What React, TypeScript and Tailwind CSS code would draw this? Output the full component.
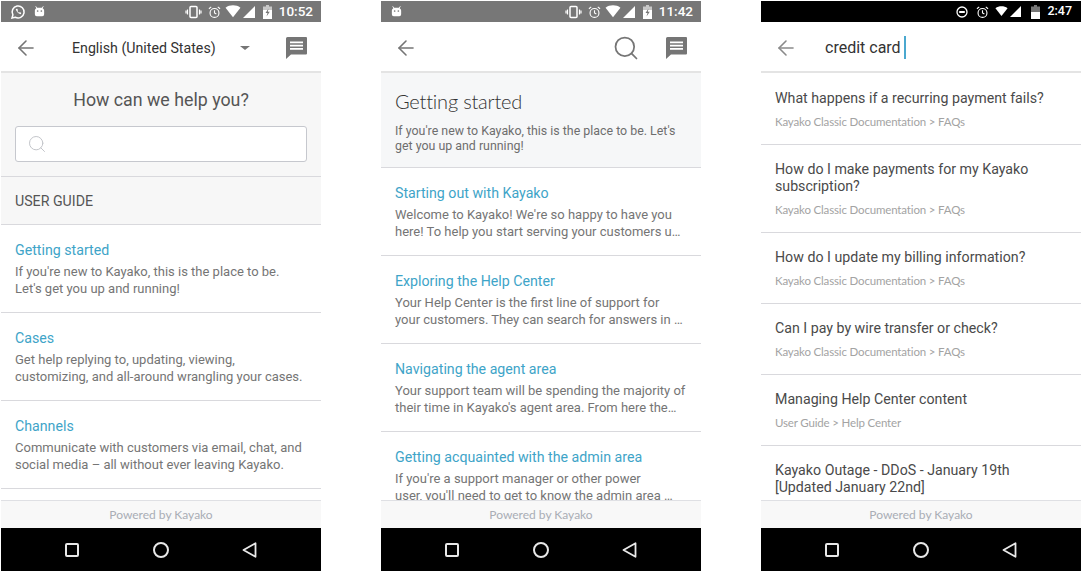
import { ArrowLeft, Search } from "lucide-react";
import type { ReactNode } from "react";

const guide = [
  {
    title: "Getting started",
    lines: ["If you're new to Kayako, this is the place to be.", "Let's get you up and running!"],
  },
  {
    title: "Cases",
    lines: ["Get help replying to, updating, viewing,", "customizing, and all-around wrangling your cases."],
  },
  {
    title: "Channels",
    lines: ["Communicate with customers via email, chat, and", "social media – all without ever leaving Kayako."],
  },
];

const articles = [
  {
    title: "Starting out with Kayako",
    lines: ["Welcome to Kayako! We're so happy to have you", "here! To help you start serving your customers u…"],
  },
  {
    title: "Exploring the Help Center",
    lines: ["Your Help Center is the first line of support for", "your customers. They can search for answers in …"],
  },
  {
    title: "Navigating the agent area",
    lines: ["Your support team will be spending the majority of", "their time in Kayako's agent area. From here the…"],
  },
  {
    title: "Getting acquainted with the admin area",
    lines: ["If you're a support manager or other power", "user, you'll need to get to know the admin area …"],
  },
];

const results = [
  { title: ["What happens if a recurring payment fails?"], crumb: "Kayako Classic Documentation > FAQs" },
  { title: ["How do I make payments for my Kayako", "subscription?"], crumb: "Kayako Classic Documentation > FAQs" },
  { title: ["How do I update my billing information?"], crumb: "Kayako Classic Documentation > FAQs" },
  { title: ["Can I pay by wire transfer or check?"], crumb: "Kayako Classic Documentation > FAQs" },
  { title: ["Managing Help Center content"], crumb: "User Guide > Help Center" },
  { title: ["Kayako Outage - DDoS - January 19th", "[Updated January 22nd]"], crumb: "" },
];

function Android() {
  return (
    <svg width="13" height="13" viewBox="0 0 14 14" fill="#fff">
      <path d="M3 1l1.500 2h5L11 1l.5.4L10.400 3.400c.9.6 1.600 1.600 1.600 2.800V10a2 2 0 0 1-2 2H4a2 2 0 0 1-2-2V6.200c0-1.200.7-2.200 1.600-2.800L2.500 1.400z" />
      <circle cx="5" cy="6.500" r=".9" fill="#777" />
      <circle cx="9" cy="6.500" r=".9" fill="#777" />
    </svg>
  );
}

function WhatsApp() {
  return (
    <svg width="16" height="16" viewBox="0 0 16 16" fill="none" stroke="#fff" strokeWidth="1.500">
      <path d="M2 14l.9-3.100A6 6 0 1 1 5.200 13.200z" />
      <path d="M5.700 5c.6 2.700 2.300 4.500 5 5.200l.6-1.300-1.500-.8-.7.6c-.7-.4-1.300-1-1.700-1.800l.6-.7-.7-1.500z" fill="#fff" stroke="none" />
    </svg>
  );
}

function Vibrate() {
  return (
    <svg width="17" height="14" viewBox="0 0 16 14" fill="none" stroke="#fff">
      <rect x="4.500" y="1.500" width="7" height="11" rx="1" strokeWidth="1.500" />
      <path d="M2 4.500v5M14 4.500v5M.5 5.500v3M15.500 5.500v3" strokeWidth="1.200" />
    </svg>
  );
}

function Alarm() {
  return (
    <svg width="13" height="14" viewBox="0 0 14 14" fill="none" stroke="#fff" strokeWidth="1.200">
      <circle cx="7" cy="8" r="4.800" />
      <path d="M7 5.200V8l2 1.200M1 3.500l2.500-2M13 3.500l-2.500-2" />
    </svg>
  );
}

function Wifi({ width }: { width: number }) {
  return (
    <svg width={width} height={width * 0.8} viewBox="0 0 15 12" fill="#fff">
      <path d="M.5 2.500C4.500-.5 10.500-.5 14.500 2.500L7.500 11.500z" />
    </svg>
  );
}

function Signal({ size }: { size: number }) {
  return (
    <svg width={size} height={size} viewBox="0 0 12 12" fill="#fff">
      <path d="M12 0v12H0z" />
    </svg>
  );
}

function Battery({ bolt }: { bolt: boolean }) {
  return bolt ? (
    <svg width="9" height="14" viewBox="0 0 9 14">
      <path d="M3 0h3v1.500h3V14H0V1.500h3z" fill="#c8c8c8" />
      <path d="M0 5h9v9H0z" fill="#fff" />
      <path d="M5.500 3.500L2.500 8h2l-1 3.500L6.800 6.800h-2z" fill="#777" />
    </svg>
  ) : (
    <svg width="9" height="14" viewBox="0 0 9 14">
      <path d="M3 0h3v1.500h3V14H0V1.500h3z" fill="#777" />
      <path d="M0 7h9v7H0z" fill="#fff" />
    </svg>
  );
}

function GrayStatus({ left, time }: { left: ReactNode; time: string }) {
  return (
    <div className="flex h-[21px] shrink-0 items-center bg-[#777] pl-[9px] pr-[8px] text-white">
      {left}
      <div className="ml-auto flex items-center">
        <Vibrate />
        <div className="ml-[6px] flex"><Alarm /></div>
        <div className="ml-[4px] flex"><Wifi width={16} /></div>
        <div className="ml-[2px] flex"><Signal size={12} /></div>
        <div className="ml-[8px] flex"><Battery bolt /></div>
        <span className="ml-[7px] text-[13.500px] font-medium">{time}</span>
      </div>
    </div>
  );
}

function Nav() {
  return (
    <div className="flex h-[43px] shrink-0 items-center justify-between bg-black pl-[64px] pr-[64px]">
      <div className="h-[14px] w-[14px] rounded-[2px] border-2 border-[#e8e8e8]" />
      <div className="h-[16px] w-[16px] rounded-full border-2 border-[#e8e8e8]" />
      <svg width="15" height="16" viewBox="0 0 15 16" fill="none" stroke="#e8e8e8" strokeWidth="1.800" strokeLinejoin="round">
        <path d="M13.500 1.200v13.600L1.500 8z" />
      </svg>
    </div>
  );
}

function Chat() {
  return (
    <svg width="22" height="22" viewBox="0 0 22 22" fill="#757575">
      <path d="M2.500 0h18.500a1 1 0 0 1 1 1v15.500a1 1 0 0 1-1 1H6L1 22V1.500A1.500 1.500 0 0 1 2.500 0z" />
      <path d="M5 4.500h13v1.700H5zM5 7.800h13v1.700H5zM5 11.100h13v1.700H5z" fill="#fff" />
    </svg>
  );
}

function Phone({ status, children }: { status: ReactNode; children: ReactNode }) {
  return (
    <div className="flex h-[570px] w-[320px] flex-col overflow-hidden bg-white">
      {status}
      {children}
      <div className="flex h-[28px] shrink-0 items-center justify-center border-t border-[#dfe0e4] bg-[#f8f8f8] text-[12px] text-[#a9adb5] font-['Lato',sans-serif]">
        Powered by Kayako
      </div>
      <Nav />
    </div>
  );
}

function Row({ title, lines }: { title: string; lines: string[] }) {
  return (
    <div className="h-[88px] border-b border-[#d9d9dd] pl-[14px] pt-[16px] whitespace-nowrap">
      <div className="text-[14.200px] leading-[18px] text-[#3ea4c8]">{title}</div>
      <div className="mt-[4px] text-[13px] leading-[17px] text-[#757575]">
        {lines.map((l) => (
          <div key={l}>{l}</div>
        ))}
      </div>
    </div>
  );
}

export default function App() {
  return (
    <div className="flex h-[571px] w-[1081px] gap-[60px] overflow-hidden bg-white pt-px pl-px font-['Roboto',sans-serif]">
      {/* Home */}
      <Phone
        status={
          <GrayStatus
            time="10:52"
            left={
              <>
                <WhatsApp />
                <div className="ml-[7px] flex"><Android /></div>
              </>
            }
          />
        }
      >
        <div className="flex h-[51px] shrink-0 items-center border-b-2 border-[#e4e4e4] pl-[13px] pr-[14px] pt-[2px]">
          <ArrowLeft size={24} strokeWidth={1.600} color="#757575" />
          <span className="ml-[34px] mt-[2px] text-[14.200px] text-[#333]">English (United States)</span>
          <div className="ml-[24px] h-0 w-0 border-x-[5px] border-t-[4px] border-x-transparent border-t-[#757575]" />
          <div className="ml-auto flex"><Chat /></div>
        </div>
        <div className="h-[104px] shrink-0 border-b border-[#d9d9dd] bg-[#f7f7f7] px-[14px] pt-[16px]">
          <div className="text-center text-[17.800px] leading-[22px] text-[#555]">How can we help you?</div>
          <div className="mt-[15px] flex h-[36px] items-center rounded-[3px] border border-[#c6c8ce] bg-white pl-[11px]">
            <Search size={20} strokeWidth={1.200} color="#c3c5ca" />
          </div>
        </div>
        <div className="flex h-[48px] shrink-0 items-center border-b border-[#d9d9dd] bg-[#f7f7f7] px-[14px] pt-[2px] text-[14.200px] text-[#555]">
          USER GUIDE
        </div>
        <div className="min-h-0 flex-1">
          {guide.map((g) => (
            <Row key={g.title} title={g.title} lines={g.lines} />
          ))}
        </div>
      </Phone>

      {/* Category */}
      <Phone status={<GrayStatus time="11:42" left={<Android />} />}>
        <div className="flex h-[51px] shrink-0 items-center border-b-2 border-[#e4e4e4] pl-[13px] pr-[14px] pt-[2px]">
          <ArrowLeft size={24} strokeWidth={1.600} color="#757575" />
          <Search size={28} strokeWidth={1.500} color="#757575" className="ml-auto mr-[25px]" />
          <Chat />
        </div>
        <div className="h-[95px] shrink-0 border-b border-[#d9d9dd] bg-[#f6f7f8] pl-[14px] pt-[16px]">
          <div className="text-[20px] font-light leading-[24px] tracking-[-0.2px] text-[#333] font-['Lato',sans-serif]">Getting started</div>
          <div className="mt-[10px] text-[12.400px] leading-[15px] text-[#6e6e6e]">
            <div>If you're new to Kayako, this is the place to be. Let's</div>
            <div>get you up and running!</div>
          </div>
        </div>
        <div className="min-h-0 flex-1 overflow-hidden">
          {articles.map((a) => (
            <Row key={a.title} title={a.title} lines={a.lines} />
          ))}
        </div>
      </Phone>

      {/* Search */}
      <Phone
        status={
          <div className="flex h-[21px] shrink-0 items-center justify-end bg-black pr-[9px] text-white">
            <svg width="12" height="12" viewBox="0 0 12 12" fill="none" stroke="#fff" strokeWidth="1.300">
              <circle cx="6" cy="6" r="5" />
              <path d="M3.200 6h5.600" strokeWidth="2" />
            </svg>
            <div className="ml-[8px] flex"><Alarm /></div>
            <div className="ml-[6px] flex"><Wifi width={13} /></div>
            <div className="ml-[2px] flex"><Signal size={11} /></div>
            <div className="ml-[10px] flex"><Battery bolt={false} /></div>
            <span className="ml-[7px] text-[12.500px] font-medium">2:47</span>
          </div>
        }
      >
        <div className="flex h-[51px] shrink-0 items-center border-b-2 border-[#e4e4e4] pl-[13px] pt-[2px]">
          <ArrowLeft size={24} strokeWidth={1.600} color="#8a8a8a" />
          <span className="ml-[27px] mt-[1px] text-[16px] text-[#333]">credit card</span>
          <div className="ml-[3px] h-[23px] w-[2px] bg-[#4aa8cf]" />
        </div>
        <div className="min-h-0 flex-1 overflow-hidden pt-px">
          {results.map((r) => (
            <div key={r.title[0]} className="border-b border-[#d9d9dd] pl-[14px] pt-[16px] pb-[14px] whitespace-nowrap">
              <div className="text-[14.200px] leading-[17px] text-[#4a4a4a]">
                {r.title.map((l) => (
                  <div key={l}>{l}</div>
                ))}
              </div>
              {r.crumb && (
                <div className="mt-[7px] text-[11.500px] leading-[16px] tracking-[-0.16px] text-[#a3a3a3] font-['Lato',sans-serif]">
                  {r.crumb}
                </div>
              )}
            </div>
          ))}
        </div>
      </Phone>
    </div>
  );
}
